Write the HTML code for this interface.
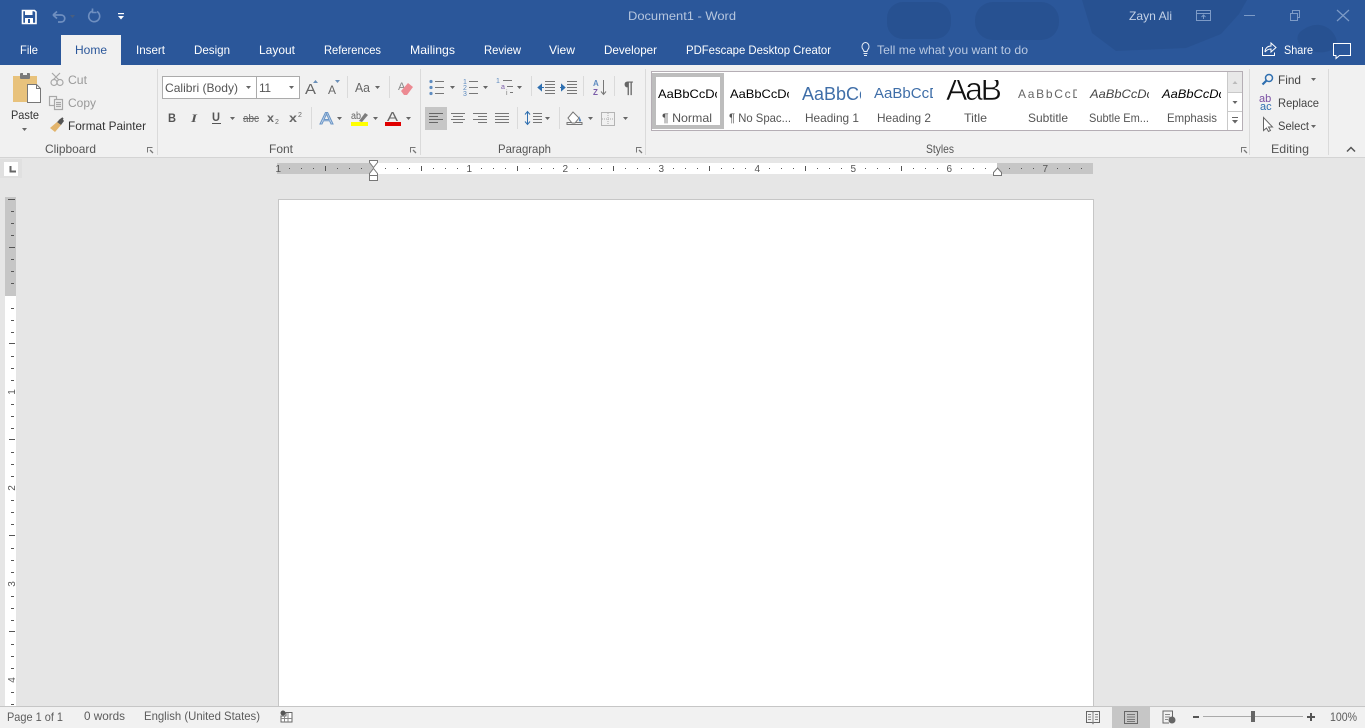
<!DOCTYPE html>
<html lang="en"><head><meta charset="utf-8"><title>Document1 - Word</title>
<style>
html,body{margin:0;padding:0;width:1365px;height:728px;overflow:hidden;background:#e6e6e6}
svg{display:block}
text{font-family:"Liberation Sans",sans-serif;font-size:12px;fill:#444}
.t{fill:#fff;font-size:12px}
.st{fill:#5c5c5c;font-size:12px}
.lb{fill:#555;font-size:12px}
</style></head><body>
<svg width="1365" height="728" viewBox="0 0 1365 728" xmlns="http://www.w3.org/2000/svg">
<defs>
<path id="d" d="M0 0h5l-2.500 3z" fill="#666"/>
<clipPath id="c1"><rect x="656" y="80" width="61" height="30"/></clipPath>
<clipPath id="c2"><rect x="728" y="80" width="61" height="30"/></clipPath>
<clipPath id="cH1"><rect x="800" y="80" width="61" height="30"/></clipPath>
<clipPath id="cH2"><rect x="872" y="80" width="61" height="30"/></clipPath>
<clipPath id="cTitle"><rect x="940" y="80" width="70" height="30"/></clipPath>
<clipPath id="cS"><rect x="1016" y="80" width="61" height="30"/></clipPath>
<clipPath id="cE1"><rect x="1088" y="80" width="61" height="30"/></clipPath>
<clipPath id="cE2"><rect x="1160" y="80" width="61" height="30"/></clipPath>
</defs>

<!-- background -->
<rect width="1365" height="728" fill="#e6e6e6"/>

<!-- title bar -->
<rect width="1365" height="65" fill="#2b579a"/>
<g fill="#27508f" opacity=".8">
<rect x="887" y="2" width="64" height="37" rx="16"/>
<rect x="975" y="2" width="84" height="38" rx="18"/>
<path d="M1082 0h165l-8 14-18 20-35 14-70 3-24-18z"/>
<path d="M1300 32c14-12 30-8 36 6 4 10-8 16-20 14-12-2-24-10-16-20z"/>
</g>

<!-- QAT -->
<path d="M22.500 10.500h12l1.500 1.500v11.500h-13.500z" fill="none" stroke="#fff" stroke-width="1.600"/>
<rect x="25" y="11" width="7.500" height="4" fill="#fff"/><rect x="25" y="18" width="8" height="5.500" fill="#fff"/>
<rect x="28" y="19" width="2" height="4" fill="#2b579a"/>
<path d="M53 15h8c5 0 5 7 0 7h-3M53 15l4-3.500M53 15l4 3.500" fill="none" stroke="#6f8fc0" stroke-width="1.700"/>
<use href="#d" x="70" y="15" opacity=".5"/>
<path d="M97 11.500a5.500 5.500 0 1 1-4.500-.5M92.500 8.500v4h4" fill="none" stroke="#6f8fc0" stroke-width="1.600"/>
<rect x="118" y="13" width="6" height="1.200" fill="#fff"/><path d="M118 16h6l-3 3.500z" fill="#fff"/>

<text x="628" y="20" textLength="108" lengthAdjust="spacingAndGlyphs" style="fill:#b6c6de">Document1  -  Word</text>
<text x="1129" y="20" textLength="43" lengthAdjust="spacingAndGlyphs" style="fill:#c3d1e6">Zayn Ali</text>
<g fill="none" stroke="#7d9bc7">
<rect x="1196.500" y="10.500" width="14" height="10"/><path d="M1197 13.500h13M1203.500 19v-4M1201.500 17l2-2 2 2"/>
<path d="M1244 15.500h11"/>
<rect x="1290.500" y="13.500" width="7" height="7"/><path d="M1292.500 13v-2.500h7v7h-2"/>
<path d="M1337 10l12 11M1349 10l-12 11" stroke-width="1.200"/>
</g>

<!-- tabs -->
<rect x="61" y="35" width="60" height="30" fill="#f1f1f1"/>
<text class="t" x="20" y="54" textLength="18" lengthAdjust="spacingAndGlyphs">File</text>
<text x="75" y="54" textLength="32" lengthAdjust="spacingAndGlyphs" style="fill:#2b579a">Home</text>
<text class="t" x="136" y="54" textLength="29" lengthAdjust="spacingAndGlyphs">Insert</text>
<text class="t" x="194" y="54" textLength="36" lengthAdjust="spacingAndGlyphs">Design</text>
<text class="t" x="259" y="54" textLength="36" lengthAdjust="spacingAndGlyphs">Layout</text>
<text class="t" x="324" y="54" textLength="57" lengthAdjust="spacingAndGlyphs">References</text>
<text class="t" x="410" y="54" textLength="45" lengthAdjust="spacingAndGlyphs">Mailings</text>
<text class="t" x="484" y="54" textLength="37" lengthAdjust="spacingAndGlyphs">Review</text>
<text class="t" x="549" y="54" textLength="26" lengthAdjust="spacingAndGlyphs">View</text>
<text class="t" x="604" y="54" textLength="53" lengthAdjust="spacingAndGlyphs">Developer</text>
<text class="t" x="686" y="54" textLength="145" lengthAdjust="spacingAndGlyphs">PDFescape Desktop Creator</text>
<path d="M863.500 53.500h4M864 55.500h3" fill="none" stroke="#e6ecf5"/>
<path d="M862 47c0-6 7-6 7 0 0 2-2 3-2 4.500h-3c0-1.500-2-2.500-2-4.500z" fill="#2b579a" stroke="#e6ecf5"/>
<text x="877" y="54" textLength="151" lengthAdjust="spacingAndGlyphs" style="fill:#b9c9e2">Tell me what you want to do</text>
<path d="M1262.500 47v8.500h12v-3M1265 52c0-4 3-6 6-6v-3l5 4.500-5 4.500v-3c-3 0-4 1-6 3" fill="none" stroke="#fff"/>
<text class="t" x="1284" y="54" textLength="29" lengthAdjust="spacingAndGlyphs">Share</text>
<path d="M1333.500 43.500h17v12h-11l-3.500 3v-3h-2.500z" fill="none" stroke="#fff"/>

<!-- ribbon -->
<rect y="65" width="1365" height="92" fill="#f1f1f1"/>
<rect y="157" width="1365" height="1" fill="#d4d4d4"/>
<g fill="#dadada">
<rect x="157" y="69" width="1" height="86"/><rect x="420" y="69" width="1" height="86"/>
<rect x="645" y="69" width="1" height="86"/><rect x="1249" y="69" width="1" height="86"/>
<rect x="1328" y="69" width="1" height="86"/>
<rect x="347" y="76" width="1" height="22"/><rect x="389" y="76" width="1" height="22"/>
<rect x="311" y="107" width="1" height="22"/>
<rect x="531" y="76" width="1" height="20"/><rect x="583" y="76" width="1" height="20"/><rect x="614" y="76" width="1" height="20"/>
<rect x="517" y="107" width="1" height="22"/><rect x="559" y="107" width="1" height="22"/>
</g>

<!-- Clipboard -->
<rect x="13" y="76" width="24" height="26" fill="#e8c27c"/>
<rect x="20" y="73" width="10" height="6" rx="1" fill="#7a7a7a"/><rect x="23" y="73" width="4" height="2" fill="#f1f1f1"/>
<path d="M27.500 84.500h9l4 4v14h-13z" fill="#fff" stroke="#777"/><path d="M36.500 84.500v4h4" fill="none" stroke="#777"/>
<text x="11" y="119" textLength="28" lengthAdjust="spacingAndGlyphs" style="fill:#333">Paste</text>
<use href="#d" x="22" y="128"/>
<g fill="none" stroke="#a8a8a8" stroke-width="1.200">
<circle cx="54" cy="82.500" r="3"/><circle cx="60" cy="82.500" r="3"/><path d="M52 73l7 7M60 73l-7 7"/>
<rect x="49.500" y="96.500" width="7" height="9"/><path d="M54.500 99.500h8v10h-8z" fill="#f1f1f1"/><path d="M56 102.500h5M56 104.500h5M56 106.500h5"/>
</g>
<text x="68" y="84" textLength="19" lengthAdjust="spacingAndGlyphs" style="fill:#999">Cut</text>
<text x="68" y="107" textLength="28" lengthAdjust="spacingAndGlyphs" style="fill:#999">Copy</text>
<path d="M50 128l7-6 4 3-6 7z" fill="#e2b46c"/><path d="M57 122l5-4 2 3-3 4z" fill="#555"/>
<path d="M59 121l4-3" stroke="#555" stroke-width="2"/>
<text x="68" y="130" textLength="78" lengthAdjust="spacingAndGlyphs" style="fill:#333">Format Painter</text>
<text class="lb" x="45" y="153" textLength="51" lengthAdjust="spacingAndGlyphs">Clipboard</text>

<!-- launcher icons -->
<g fill="none" stroke="#777">
<path d="M147.500 152.500v-5h5"/><path d="M410.500 152.500v-5h5"/><path d="M636.500 152.500v-5h5"/><path d="M1241.500 152.500v-5h5"/>
<path d="M150 150l3 3M413 150l3 3M639 150l3 3M1244 150l3 3" stroke-width="1.300"/>
</g>

<!-- Font -->
<rect x="162.500" y="76.500" width="94" height="22" fill="#fff" stroke="#ababab"/>
<rect x="256.500" y="76.500" width="43" height="22" fill="#fff" stroke="#ababab"/>
<text x="165" y="92" textLength="73" lengthAdjust="spacingAndGlyphs" style="fill:#555">Calibri (Body)</text>
<use href="#d" x="246" y="86"/>
<text x="259" y="92" textLength="12" style="fill:#555">11</text>
<use href="#d" x="289" y="86"/>
<text x="305" y="94" style="font-size:15px;fill:#666" textLength="11" lengthAdjust="spacingAndGlyphs">A</text>
<path d="M313 83h5l-2.500-3z" fill="#6a8fb8"/>
<text x="328" y="94" style="font-size:12px;fill:#666" textLength="8" lengthAdjust="spacingAndGlyphs">A</text>
<path d="M335 80h5l-2.500 3z" fill="#6a8fb8"/>
<text x="355" y="92" style="font-size:13px;fill:#666" textLength="15" lengthAdjust="spacingAndGlyphs">Aa</text>
<use href="#d" x="375" y="86"/>
<text x="398" y="90" style="font-size:11px;fill:#888">A</text>
<path d="M401 91l7-8 5 4-6 8h-3z" fill="#ec8a92"/>

<text x="168" y="122" style="font-weight:bold;fill:#555" textLength="8" lengthAdjust="spacingAndGlyphs">B</text>
<text x="191" y="122" style="font-style:italic;fill:#555;font-family:'Liberation Serif',serif;font-weight:bold" textLength="6" lengthAdjust="spacingAndGlyphs">I</text>
<text x="212" y="121" style="font-weight:bold;fill:#555" textLength="8" lengthAdjust="spacingAndGlyphs">U</text><rect x="212" y="123" width="9" height="1" fill="#555"/>
<use href="#d" x="230" y="117"/>
<text x="243" y="122" textLength="16" lengthAdjust="spacingAndGlyphs" style="fill:#666;font-size:11px">abc</text><rect x="243" y="118" width="16" height="1" fill="#666"/>
<text x="267" y="122" style="font-weight:bold;fill:#666" textLength="7" lengthAdjust="spacingAndGlyphs">x</text><text x="275" y="124" style="font-size:7px;fill:#666">2</text>
<text x="289" y="122" style="font-weight:bold;fill:#666" textLength="8" lengthAdjust="spacingAndGlyphs">x</text><text x="298" y="117" style="font-size:7px;fill:#666">2</text>
<text x="320" y="124" style="font-size:17px;fill:#eaf1fa;stroke:#6d97c7;stroke-width:1" textLength="13" lengthAdjust="spacingAndGlyphs">A</text>
<use href="#d" x="337" y="117"/>
<text x="351" y="119" style="font-size:10px;fill:#666" textLength="10" lengthAdjust="spacingAndGlyphs">ab</text>
<path d="M359 121l6-8 3 2-6 7z" fill="#7c7c7c"/><rect x="351" y="122" width="17" height="4" fill="#ffff00"/>
<use href="#d" x="373" y="117"/>
<text x="387" y="121" style="font-size:13px;fill:#666" textLength="11" lengthAdjust="spacingAndGlyphs">A</text><rect x="385" y="122" width="16" height="4" fill="#e00000"/>
<use href="#d" x="406" y="117"/>
<text class="lb" x="269" y="153" textLength="24" lengthAdjust="spacingAndGlyphs">Font</text>

<!-- Paragraph -->
<g stroke="#777" stroke-width="1" fill="none">
<path d="M435 81.500h9M435 87.500h9M435 93.500h9"/>
<path d="M469 81.500h9M469 87.500h9M469 93.500h9"/>
<path d="M503 80.500h9M507 86.500h6M510 92.500h3"/>
<path d="M545 81.500h10M545 84.500h10M545 87.500h10M545 90.500h10M545 93.500h10"/>
<path d="M567 81.500h10M567 84.500h10M567 87.500h10M567 90.500h10M567 93.500h10"/>
<path d="M603.500 80v14M601 91.500l2.500 3 2.500-3"/>
</g>
<g fill="#5f8cc0"><circle cx="431" cy="81.500" r="1.600"/><circle cx="431" cy="87.500" r="1.600"/><circle cx="431" cy="93.500" r="1.600"/></g>
<use href="#d" x="450" y="86"/>
<text x="463" y="84" style="font-size:7px;fill:#5f8cc0">1</text><text x="463" y="90" style="font-size:7px;fill:#5f8cc0">2</text><text x="463" y="96" style="font-size:7px;fill:#5f8cc0">3</text>
<use href="#d" x="483" y="86"/>
<text x="496" y="83" style="font-size:7px;fill:#5f8cc0">1</text><text x="501" y="89" style="font-size:7px;fill:#7a5ca8">a</text><text x="506" y="95" style="font-size:7px;fill:#777">i</text>
<use href="#d" x="517" y="86"/>
<path d="M538 87.500h6M538 87.500l3.500-3v6z" stroke="#2f6fb0" fill="#2f6fb0"/>
<path d="M560 87.500h5M565 87.500l-3.500-3v6z" stroke="#2f6fb0" fill="#2f6fb0"/>
<text x="593" y="86" style="font-size:8px;fill:#5f8cc0;font-weight:bold">A</text>
<text x="593" y="95" style="font-size:8px;fill:#7a5ca8;font-weight:bold">Z</text>
<text x="624" y="93" style="font-size:17px;fill:#666;font-weight:bold">¶</text>

<rect x="425" y="107" width="22" height="23" fill="#c6c6c6"/>
<g stroke="#777" fill="none">
<path d="M429 113.500h14M429 116.500h9M429 119.500h14M429 122.500h9" stroke="#666"/>
<path d="M451 113.500h14M453 116.500h10M451 119.500h14M453 122.500h10"/>
<path d="M473 113.500h14M478 116.500h9M473 119.500h14M478 122.500h9"/>
<path d="M495 113.500h14M495 116.500h14M495 119.500h14M495 122.500h14"/>
<path d="M533 113.500h9M533 116.500h9M533 119.500h9M533 122.500h9"/>
<path d="M567 124.500h15v-2h-15z"/>
<path d="M568 118l5-6 6 6-4 5h-3z" fill="#fff"/>
<path d="M601.500 112.500h13v13h-13z" stroke-dasharray="1 1"/>
<path d="M608 113v12M602 119h12" stroke-dasharray="1 1" stroke="#aaa"/>
</g>
<path d="M527.500 112v12M525 114.500l2.500-3 2.500 3M525 121.500l2.500 3 2.500-3" fill="none" stroke="#2f6fb0"/>
<path d="M579 116l2 4c1 2-3 2-2 0z" fill="#5f8cc0"/>
<use href="#d" x="545" y="117"/><use href="#d" x="588" y="117"/><use href="#d" x="623" y="117"/>
<text class="lb" x="498" y="153" textLength="53" lengthAdjust="spacingAndGlyphs">Paragraph</text>

<!-- Styles -->
<rect x="651.500" y="71.500" width="591" height="59" fill="#fff" stroke="#b5aeb5"/>
<rect x="654" y="75" width="68" height="52" fill="#fff" stroke="#bdbdbd" stroke-width="4"/>
<rect x="1228" y="72" width="14" height="20" fill="#e8e8e8"/>
<g fill="#c9c9c9"><rect x="1227" y="72" width="1" height="58"/><rect x="1228" y="92" width="14" height="1"/><rect x="1228" y="111" width="14" height="1"/></g>
<path d="M1232.500 84h5l-2.500-3z" fill="#bbb"/>
<use href="#d" x="1232.500" y="101"/>
<rect x="1232" y="117" width="6" height="1" fill="#666"/><path d="M1232 120h6l-3 3.500z" fill="#666"/>

<g clip-path="url(#c1)"><text x="658" y="98" textLength="63" lengthAdjust="spacingAndGlyphs" style="fill:#000;font-size:12px">AaBbCcDc</text></g>
<g clip-path="url(#c2)"><text x="730" y="98" textLength="63" lengthAdjust="spacingAndGlyphs" style="fill:#000;font-size:12px">AaBbCcDc</text></g>
<g clip-path="url(#cH1)"><text x="802" y="100" textLength="66" lengthAdjust="spacingAndGlyphs" style="fill:#3f6ea8;font-size:18px">AaBbCc</text></g>
<g clip-path="url(#cH2)"><text x="874" y="98" textLength="66" lengthAdjust="spacingAndGlyphs" style="fill:#3f6ea8;font-size:15px">AaBbCcD</text></g>
<g clip-path="url(#cTitle)"><text x="946" y="100" textLength="56" style="fill:#111;font-size:32px;stroke:#fff;stroke-width:.6">AaB</text></g>
<g clip-path="url(#cS)"><text x="1018" y="98" textLength="63" style="fill:#666;font-size:12px">AaBbCcD</text></g>
<g clip-path="url(#cE1)"><text x="1090" y="98" textLength="63" lengthAdjust="spacingAndGlyphs" style="fill:#444;font-size:12px;font-style:italic">AaBbCcDc</text></g>
<g clip-path="url(#cE2)"><text x="1162" y="98" textLength="63" lengthAdjust="spacingAndGlyphs" style="fill:#000;font-size:12px;font-style:italic">AaBbCcDc</text></g>

<text class="lb" x="662" y="122" textLength="50" lengthAdjust="spacingAndGlyphs">¶ Normal</text>
<text class="lb" x="729" y="122" textLength="62" lengthAdjust="spacingAndGlyphs">¶ No Spac...</text>
<text class="lb" x="805" y="122" textLength="54" lengthAdjust="spacingAndGlyphs">Heading 1</text>
<text class="lb" x="877" y="122" textLength="54" lengthAdjust="spacingAndGlyphs">Heading 2</text>
<text class="lb" x="964" y="122" textLength="23" lengthAdjust="spacingAndGlyphs">Title</text>
<text class="lb" x="1028" y="122" textLength="40" lengthAdjust="spacingAndGlyphs">Subtitle</text>
<text class="lb" x="1089" y="122" textLength="60" lengthAdjust="spacingAndGlyphs">Subtle Em...</text>
<text class="lb" x="1167" y="122" textLength="50" lengthAdjust="spacingAndGlyphs">Emphasis</text>
<text class="lb" x="926" y="153" textLength="28" lengthAdjust="spacingAndGlyphs">Styles</text>

<!-- Editing -->
<circle cx="1269" cy="78" r="3.500" fill="none" stroke="#2f6fb0" stroke-width="1.500"/>
<path d="M1266.500 80.500l-4 4" stroke="#2f6fb0" stroke-width="2.200"/>
<text x="1278" y="84" textLength="23" lengthAdjust="spacingAndGlyphs" style="fill:#444">Find</text>
<use href="#d" x="1311" y="78"/>
<text x="1259" y="102" style="font-size:11px;fill:#7a4fa3">ab</text>
<text x="1260" y="110" style="font-size:11px;fill:#2f6fb0">ac</text>
<text x="1278" y="107" textLength="41" lengthAdjust="spacingAndGlyphs" style="fill:#444">Replace</text>
<path d="M1263.500 117.500v13l3-2.500 2 3.500 2-1-2-3.500h4z" fill="#fff" stroke="#666"/>
<text x="1278" y="130" textLength="31" lengthAdjust="spacingAndGlyphs" style="fill:#444">Select</text>
<use href="#d" x="1311" y="125"/>
<text class="lb" x="1271" y="153" textLength="38" lengthAdjust="spacingAndGlyphs">Editing</text>
<path d="M1347 151.500l4-4 4 4" fill="none" stroke="#555" stroke-width="1.500"/>

<!-- tab selector -->
<rect x="0" y="159" width="22" height="19" fill="#e0e0e0"/>
<rect x="4" y="162" width="14" height="14" fill="#fff"/>
<path d="M10.500 166v5.500H16" fill="none" stroke="#666" stroke-width="2"/>

<!-- horizontal ruler -->
<rect x="277" y="163" width="816" height="11" fill="#c6c6c6"/>
<rect x="373" y="163" width="624" height="11" fill="#fff"/>
<path d="M289 168.500H372" stroke="#555" stroke-dasharray="1 11 1 11 1 23 1 11 1 11 1 23" fill="none"/>
<path d="M385 168.500H1090" stroke="#555" stroke-dasharray="1 11 1 11 1 23 1 11 1 11 1 23" fill="none"/>
<path d="M325.500 166v5M421.500 166v5M517.500 166v5M613.500 166v5M709.500 166v5M805.500 166v5M901.500 166v5" stroke="#555" fill="none"/>
<text x="275.500" y="172" style="font-size:10px;fill:#555">1</text>
<text x="466.500" y="172" style="font-size:10px;fill:#555">1</text>
<text x="562.500" y="172" style="font-size:10px;fill:#555">2</text>
<text x="658.500" y="172" style="font-size:10px;fill:#555">3</text>
<text x="754.500" y="172" style="font-size:10px;fill:#555">4</text>
<text x="850.500" y="172" style="font-size:10px;fill:#555">5</text>
<text x="946.500" y="172" style="font-size:10px;fill:#555">6</text>
<text x="1042.500" y="172" style="font-size:10px;fill:#555">7</text>
<path d="M369.500 160.500h8v2l-4 5-4-5z" fill="#fff" stroke="#777"/>
<path d="M369.500 173.500l4-5 4 5v2h-8z" fill="#fff" stroke="#777"/>
<rect x="369.500" y="175.500" width="8" height="5" fill="#fff" stroke="#777"/>
<path d="M993.500 175.500v-3l4-4.500 4 4.500v3z" fill="#fff" stroke="#777"/>

<!-- vertical ruler -->
<rect x="5" y="197" width="11" height="509" fill="#fff"/>
<rect x="5" y="197" width="11" height="99" fill="#c6c6c6"/>
<path d="M11 212h3M11 224h3M11 236h3M11 260h3M11 272h3M11 284h3" stroke="#555" fill="none" transform="translate(0,-.5)"/>
<path d="M8 199.500h7M9 247.500h6M9 343.500h6M9 439.500h6M9 535.500h6M9 631.500h6" stroke="#555" fill="none"/>
<path d="M11 308.500h3M11 320.500h3M11 332.500h3M11 356.500h3M11 368.500h3M11 380.500h3M11 404.500h3M11 416.500h3M11 428.500h3M11 452.500h3M11 464.500h3M11 476.500h3M11 500.500h3M11 512.500h3M11 524.500h3M11 548.500h3M11 560.500h3M11 572.500h3M11 596.500h3M11 608.500h3M11 620.500h3M11 644.500h3M11 656.500h3M11 668.500h3M11 692.500h3M11 704.500h3" stroke="#555" fill="none"/>
<text transform="translate(15,392) rotate(-90)" text-anchor="middle" style="font-size:10px;fill:#555">1</text>
<text transform="translate(15,488) rotate(-90)" text-anchor="middle" style="font-size:10px;fill:#555">2</text>
<text transform="translate(15,584) rotate(-90)" text-anchor="middle" style="font-size:10px;fill:#555">3</text>
<text transform="translate(15,680) rotate(-90)" text-anchor="middle" style="font-size:10px;fill:#555">4</text>

<!-- page -->
<rect x="278.500" y="199.500" width="815" height="530" fill="#fff" stroke="#c6c6c6"/>

<!-- status bar -->
<rect y="706" width="1365" height="22" fill="#f1f1f1"/>
<rect y="706" width="1365" height="1" fill="#c6c6c6"/>
<text class="st" x="7" y="721" textLength="56" lengthAdjust="spacingAndGlyphs">Page 1 of 1</text>
<text class="st" x="84" y="720" textLength="41" lengthAdjust="spacingAndGlyphs">0 words</text>
<text class="st" x="144" y="720" textLength="116" lengthAdjust="spacingAndGlyphs">English (United States)</text>
<circle cx="283" cy="713" r="2.500" fill="#555"/>
<path d="M286 712.500h6v9.500h-11v-6h5z" fill="#fff" stroke="#666"/>
<path d="M281 718.500h11M284.500 716v6M288 713v9" stroke="#888" fill="none"/>

<rect x="1112" y="707" width="38" height="21" fill="#c6c6c6"/>
<g fill="none" stroke="#666">
<path d="M1086.500 711.500h6l.5 1 .5-1h6v11h-6l-.5 1-.5-1h-6z"/><path d="M1093 712v11M1088 714.500h3M1088 717h3M1088 719.500h3M1095 714.500h3M1095 717h3M1095 719.500h3" stroke="#888"/>
<rect x="1124.500" y="711.500" width="13" height="12"/><path d="M1127 714.500h8M1127 717h8M1127 719.500h8M1127 721.500h8" stroke="#777"/>
<path d="M1172.500 719v-8h-9.500v12h6"/><path d="M1165 714.500h5M1165 717h5M1165 719.500h3" stroke="#888"/>
</g>
<circle cx="1172" cy="720" r="3.500" fill="#666"/>
<rect x="1193" y="716" width="6" height="2" fill="#555"/>
<rect x="1203" y="716" width="100" height="1" fill="#aaa"/>
<rect x="1251" y="711" width="4" height="11" fill="#666"/>
<rect x="1307" y="716" width="8" height="2" fill="#555"/><rect x="1310" y="713" width="2" height="8" fill="#555"/>
<text class="st" x="1330" y="721" textLength="27" lengthAdjust="spacingAndGlyphs">100%</text>
</svg>
</body></html>
